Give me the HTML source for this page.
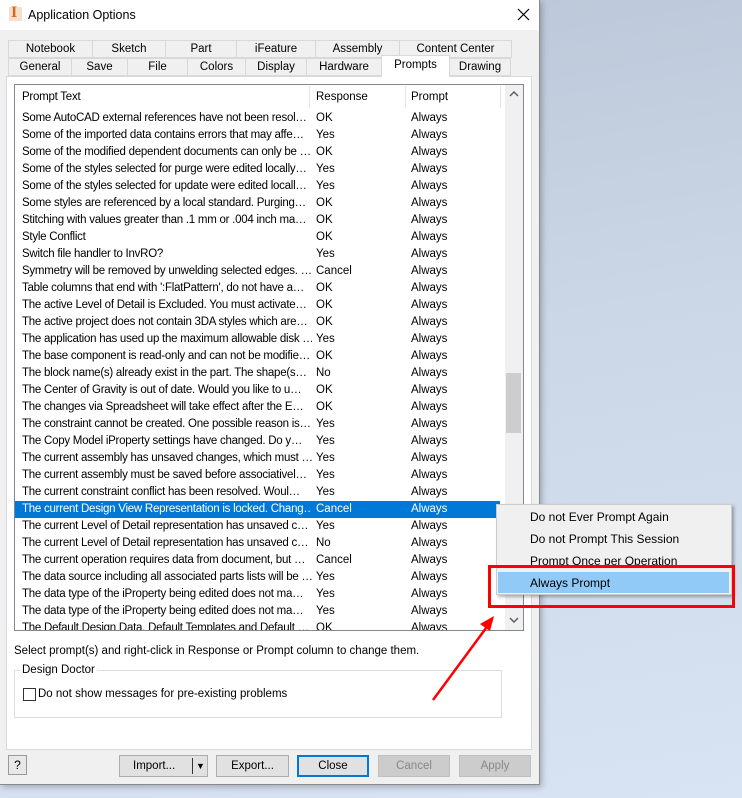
<!DOCTYPE html>
<html><head><meta charset="utf-8"><style>
*{margin:0;padding:0;box-sizing:border-box}
body{width:742px;height:798px;overflow:hidden;font-family:"Liberation Sans",sans-serif;font-size:11.5px;color:#000;background:linear-gradient(170deg,#b9c5d6 0%,#cbd6e6 45%,#d8e3f3 100%);position:relative}
.abs{position:absolute}
#dlg{left:0;top:0;width:540px;height:785px;background:#f0f0f0;border-right:1px solid #8a8a8a;border-bottom:1px solid #8a8a8a;box-shadow:2px 2px 6px rgba(0,0,0,.25)}
#title{left:0;top:0;width:539px;height:30px;background:#fff}
.tab{position:absolute;height:18px;border:1px solid #d9d9d9;background:#f0f0f0;text-align:center;line-height:16px;font-size:11.5px}
#panel{left:6px;top:76px;width:526px;height:674px;background:#fff;border:1px solid #d9d9d9}
#list{left:14px;top:84px;width:510px;height:547px;border:1px solid #828790;background:#fff;overflow:hidden}
.row{position:absolute;left:0;width:485px;height:17px;line-height:17px;white-space:nowrap}
.row span{position:absolute;overflow:hidden}
.c1{left:7px;width:290px;letter-spacing:-0.25px}
.c2{left:301px}
.c3{left:396px}
.sel{background:#0078d7;color:#fff}
.btn{position:absolute;top:755px;height:22px;border:1px solid #adadad;background:#e1e1e1;text-align:center;line-height:20px;font-size:11.5px}
</style></head><body>
<div id="dlg" class="abs"></div>
<div id="title" class="abs">
 <div class="abs" style="left:9px;top:7px;width:13px;height:14px;background:#f6e0cc"></div>
 <div class="abs" style="left:11px;top:4px;font-family:'Liberation Serif',serif;font-weight:bold;color:#d2691e;font-size:16px">I</div>
 <div class="abs" style="left:28px;top:8px;font-size:12.5px">Application Options</div>
 <svg class="abs" style="left:517px;top:8px" width="13" height="13"><path d="M1 1L12 12M12 1L1 12" stroke="#000" stroke-width="1.2"/></svg>
</div>
<div class="tab" style="left:8px;top:40px;width:85px">Notebook</div>
<div class="tab" style="left:92px;top:40px;width:74px">Sketch</div>
<div class="tab" style="left:165px;top:40px;width:72px">Part</div>
<div class="tab" style="left:236px;top:40px;width:80px">iFeature</div>
<div class="tab" style="left:315px;top:40px;width:85px">Assembly</div>
<div class="tab" style="left:399px;top:40px;width:113px">Content Center</div>
<div class="tab" style="left:8px;top:58px;width:64px">General</div>
<div class="tab" style="left:71px;top:58px;width:57px">Save</div>
<div class="tab" style="left:127px;top:58px;width:61px">File</div>
<div class="tab" style="left:187px;top:58px;width:59px">Colors</div>
<div class="tab" style="left:245px;top:58px;width:62px">Display</div>
<div class="tab" style="left:306px;top:58px;width:76px">Hardware</div>
<div id="panel" class="abs"></div>
<div class="tab" style="left:381px;top:55px;width:69px;height:22px;background:#fff;border-bottom:none;line-height:18px">Prompts</div>
<div class="tab" style="left:449px;top:58px;width:62px">Drawing</div>
<div id="list" class="abs">
 <div class="row" style="top:2px;height:21px;line-height:21px"><span class="c1">Prompt Text</span><span class="c2">Response</span><span class="c3">Prompt</span></div>
 <div class="abs" style="left:294px;top:1px;width:1px;height:22px;background:#e5e5e5"></div>
 <div class="abs" style="left:390px;top:1px;width:1px;height:22px;background:#e5e5e5"></div>
 <div class="abs" style="left:485px;top:1px;width:1px;height:22px;background:#e5e5e5"></div>
 <div class="abs" style="left:490px;top:0;width:18px;height:547px;background:#f0f0f0"></div>
 <svg class="abs" style="left:494px;top:6px" width="10" height="6"><path d="M1 5L5 1L9 5" stroke="#606060" stroke-width="1.5" fill="none"/></svg>
 <div class="abs" style="left:491px;top:288px;width:15px;height:60px;background:#cdcdcd"></div>
 <svg class="abs" style="left:494px;top:532px" width="10" height="6"><path d="M1 1L5 5L9 1" stroke="#606060" stroke-width="1.5" fill="none"/></svg>
 <div id="rows"></div>
</div>
<script>
var d=[
["Some AutoCAD external references have not been resol…","OK"],
["Some of the imported data contains errors that may affe…","Yes"],
["Some of the modified dependent documents can only be …","OK"],
["Some of the styles selected for purge were edited locally…","Yes"],
["Some of the styles selected for update were edited locall…","Yes"],
["Some styles are referenced by a local standard.  Purging…","OK"],
["Stitching with values greater than .1 mm or .004 inch ma…","OK"],
["Style Conflict","OK"],
["Switch file handler to InvRO?","Yes"],
["Symmetry will be removed by unwelding selected edges. …","Cancel"],
["Table columns that end with ':FlatPattern', do not have a…","OK"],
["The active Level of Detail is Excluded.  You must activate…","OK"],
["The active project does not contain 3DA styles which are…","OK"],
["The application has used up the maximum allowable disk …","Yes"],
["The base component is read-only and can not be modifie…","OK"],
["The block name(s) already exist in the part.  The shape(s…","No"],
["The Center of Gravity is out of date. Would you like to u…","OK"],
["The changes via Spreadsheet will take effect after the E…","OK"],
["The constraint cannot be created. One possible reason is…","Yes"],
["The Copy Model iProperty settings have changed.   Do y…","Yes"],
["The current assembly has unsaved changes, which must …","Yes"],
["The current assembly must be saved before associativel…","Yes"],
["The current constraint conflict has been resolved.  Woul…","Yes"],
["The current Design View Representation is locked. Chang…","Cancel"],
["The current Level of Detail representation has unsaved c…","Yes"],
["The current Level of Detail representation has unsaved c…","No"],
["The current operation requires data from document, but …","Cancel"],
["The data source including all associated parts lists will be …","Yes"],
["The data type of the iProperty being edited does not ma…","Yes"],
["The data type of the iProperty being edited does not ma…","Yes"],
["The Default Design Data, Default Templates and Default …","OK"]];
var h="";for(var i=0;i<d.length;i++){h+='<div class="row'+(i==23?' sel':'')+'" style="top:'+(25+i*17)+'px"><span class="c1">'+d[i][0]+'</span><span class="c2">'+d[i][1]+'</span><span class="c3">Always</span></div>';}
document.getElementById("rows").innerHTML=h;
</script>
<div class="abs" style="left:14px;top:645px">Select prompt(s) and right-click in Response or Prompt column to change them.</div>
<div class="abs" style="left:14px;top:670px;width:488px;height:48px;border:1px solid #dcdcdc"></div>
<div class="abs" style="left:20px;top:664px;background:#fff;padding:0 2px">Design Doctor</div>
<div class="abs" style="left:23px;top:688px;width:13px;height:13px;border:1px solid #333;background:#fff"></div>
<div class="abs" style="left:38px;top:688px">Do not show messages for pre-existing problems</div>
<div class="abs" style="left:8px;top:755px;width:19px;height:20px;border:1px solid #999;background:#e8e8e8;text-align:center;font-size:12px;line-height:18px">?</div>
<div class="btn" style="left:119px;width:89px;text-align:left;padding-left:13px">Import...<span class="abs" style="left:72px;top:2px;width:1px;height:16px;background:#333"></span><span class="abs" style="left:76px;top:0;font-size:9px">▼</span></div>
<div class="btn" style="left:216px;width:73px">Export...</div>
<div class="btn" style="left:297px;width:72px;border:2px solid #0078d7;line-height:18px">Close</div>
<div class="btn" style="left:378px;width:72px;background:#ccc;border-color:#bfbfbf;color:#888">Cancel</div>
<div class="btn" style="left:459px;width:72px;background:#ccc;border-color:#bfbfbf;color:#888">Apply</div>
<div class="abs" style="left:496px;top:504px;width:236px;height:91px;background:#f0f0f0;border:1px solid #ccc;box-shadow:2px 2px 3px rgba(0,0,0,.3)"></div>
<div class="abs" style="left:530px;top:510px;font-size:12px">Do not Ever Prompt Again</div>
<div class="abs" style="left:530px;top:532px;font-size:12px">Do not Prompt This Session</div>
<div class="abs" style="left:530px;top:554px;font-size:12px">Prompt Once per Operation</div>
<div class="abs" style="left:498px;top:572px;width:231px;height:21px;background:#91c9f7"></div>
<div class="abs" style="left:530px;top:576px;font-size:12px">Always Prompt</div>
<div class="abs" style="left:488px;top:565px;width:247px;height:43px;border:3px solid #f00"></div>
<svg class="abs" style="left:428px;top:612px" width="72" height="92"><path d="M5 88L64 8" stroke="#f00" stroke-width="2.5"/><path d="M66 4L52 12L62 19Z" fill="#f00"/></svg>
</body></html>
